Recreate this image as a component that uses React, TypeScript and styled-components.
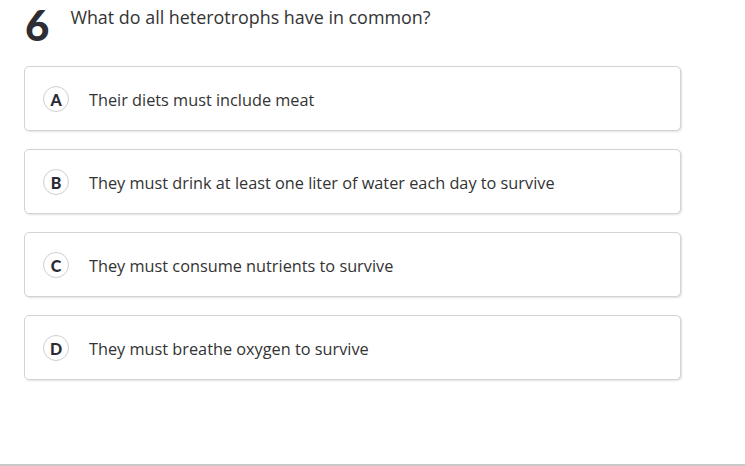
import React from 'react';
import styled, { createGlobalStyle } from 'styled-components';

const GlobalStyle = createGlobalStyle`
  html, body {
    margin: 0;
    padding: 0;
    background: #fff;
  }
  body {
    font-family: 'Open Sans', Lato, Arial, sans-serif;
    color: #333;
  }
`;

const Page = styled.div`
  display: flex;
  flex-direction: column;
  height: 100vh;
  box-sizing: border-box;
`;

const Content = styled.div`
  flex: 1;
  padding: 0 64px 0 24px;
`;

const Header = styled.div`
  display: flex;
  align-items: flex-start;
  gap: 21px;
  height: 66px;
`;

const Number = styled.div`
  font-family: Lato, 'Open Sans', sans-serif;
  font-size: 42px;
  font-weight: 900;
  line-height: 50px;
  color: #2d2d33;
  padding-left: 1px;
`;

const Question = styled.div`
  font-size: 17.9px;
  line-height: 22px;
  color: #333;
  padding-top: 6px;
`;

const Options = styled.div`
  display: flex;
  flex-direction: column;
  gap: 18px;
`;

const Card = styled.div`
  display: flex;
  align-items: center;
  gap: 20px;
  height: 65px;
  box-sizing: border-box;
  padding-left: 18px;
  border: 1px solid #d3d3d3;
  border-radius: 5px;
  background: #fff;
  box-shadow: 1px 1px 2px rgba(0, 0, 0, 0.12);
`;

const Letter = styled.div`
  width: 26px;
  height: 26px;
  box-sizing: border-box;
  border: 1px solid #cfcfcf;
  border-radius: 50%;
  display: flex;
  align-items: center;
  justify-content: center;
  font-family: Lato, 'Open Sans', sans-serif;
  font-size: 16px;
  font-weight: 900;
  color: #2a2a35;
  flex-shrink: 0;
  padding-top: 2px;
`;

const Answer = styled.div`
  font-size: 16.3px;
  color: #333;
  padding-top: 2px;
`;

const Rule = styled.div`
  height: 2px;
  background: #c8c8c8;
`;

const options = [
  { key: 'A', text: 'Their diets must include meat' },
  { key: 'B', text: 'They must drink at least one liter of water each day to survive' },
  { key: 'C', text: 'They must consume nutrients to survive' },
  { key: 'D', text: 'They must breathe oxygen to survive' },
];

const App: React.FC = () => {
  return (
    <>
      <GlobalStyle />
      <Page>
        <Content>
          <Header>
            <Number>6</Number>
            <Question>What do all heterotrophs have in common?</Question>
          </Header>
          <Options>
            {options.map((o) => (
              <Card key={o.key}>
                <Letter>{o.key}</Letter>
                <Answer>{o.text}</Answer>
              </Card>
            ))}
          </Options>
        </Content>
        <Rule />
      </Page>
    </>
  );
};

export default App;
